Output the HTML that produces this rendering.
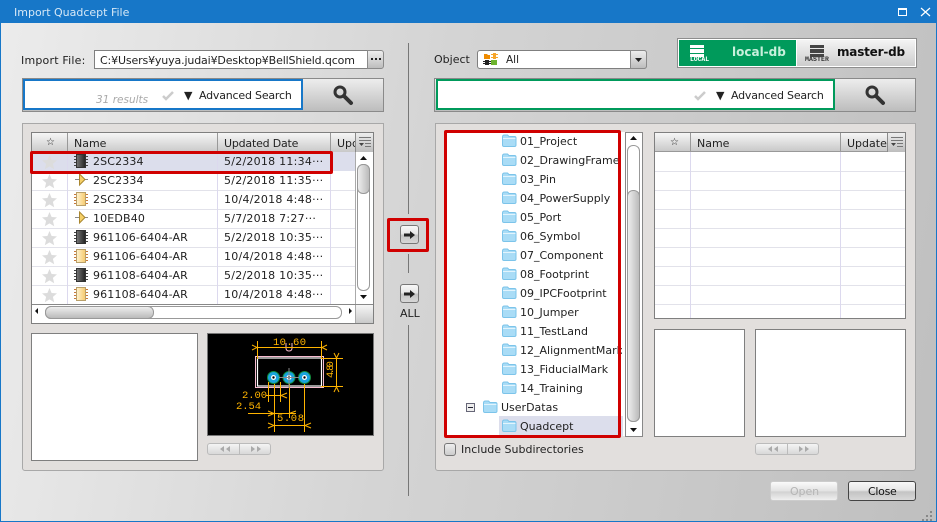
<!DOCTYPE html>
<html><head><meta charset="utf-8"><style>
html,body{margin:0;padding:0}
#w{position:relative;width:937px;height:522px;overflow:hidden;background:linear-gradient(100deg,#ececec 0%,#d4d4d4 45%,#bfbfbf 100%);font:11px "DejaVu Sans",sans-serif;color:#222}
#w div,#w span.t{position:absolute;box-sizing:border-box;white-space:nowrap}
.t{line-height:14px;margin-top:1px}
.d{letter-spacing:.25px}
.n{letter-spacing:.15px}
.as{letter-spacing:-.2px}
.panel{background:#e2dfdd;border:1px solid #a8a8a8;border-radius:0 0 3px 3px}
.box{background:#fff;border:1px solid #7f7f7f}
.hd{background:linear-gradient(#f6f6f6,#c9c9c9)}
.btn{background:linear-gradient(#f8f8f8 0,#e6e6e6 45%,#c4c4c4 55%,#d8d8d8 100%);border:1px solid #777;border-radius:3px}
.g{background:linear-gradient(#ededed,#bdbdbd);border:1px solid #8a8a8a}
.red{border:3px solid #d00000;border-radius:2px}
.hl{height:1px;background:#e2e2ea}
.vl{width:1px;background:#dcd9ee}
.nav{background:linear-gradient(#f4f4f4,#d8d8d8);border:1px solid #bbb;border-radius:3px}
svg{position:absolute;left:0;top:0}
</style></head><body><div id="w">
<div style="left:0;top:0;width:937px;height:23px;background:#1777c8"></div>
<div style="left:0;top:23px;width:1px;height:499px;background:#1777c8"></div>
<div style="left:936px;top:23px;width:1px;height:499px;background:#1777c8"></div>
<div style="left:0;top:521px;width:937px;height:1px;background:#1777c8"></div>
<span class="t" style="left:14px;top:5px;color:#d6e8f6">Import Quadcept File</span>

<span class="t n" style="left:21px;top:53px;letter-spacing:.2px">Import File:</span>
<div class="box" style="left:94px;top:50px;width:274px;height:19px"></div>
<span class="t" style="left:100px;top:53px;letter-spacing:-.14px;font-family:'DejaVu Sans','Noto Sans CJK JP',sans-serif">C:¥Users¥yuya.judai¥Desktop¥BellShield.qcom</span>
<div class="g" style="left:367px;top:50px;width:17px;height:19px;border-radius:0 3px 3px 0"></div>

<div class="g" style="left:22px;top:78px;width:362px;height:34px"></div>
<div style="left:23px;top:79px;width:280px;height:31px;background:#fff;border:2px solid #1777c8"></div>
<span class="t" style="left:96px;top:92px;color:#aaa;font-style:italic;font-size:10.5px">31 results</span>
<span class="t" style="left:184px;top:88px">▼</span>
<span class="t as" style="left:199px;top:88px">Advanced Search</span>

<span class="t" style="left:434px;top:52px">Object</span>
<div class="box" style="left:477px;top:50px;width:170px;height:19px;border-radius:3px"></div>
<div class="g" style="left:630px;top:50px;width:17px;height:19px;border-radius:0 3px 3px 0"></div>
<span class="t" style="left:506px;top:52px;font-size:10.5px">All</span>

<div style="left:677px;top:38px;width:240px;height:30px;background:#fff;border:1px solid #8d8d8d"></div>
<div style="left:679px;top:40px;width:117px;height:26px;background:#009a5b"></div>
<div style="left:797px;top:40px;width:118px;height:26px;background:linear-gradient(#f4f4f4,#cdcdcd)"></div>
<span class="t" style="left:732px;top:44px;font-weight:bold;font-size:12px;color:#c8f0dc">local-db</span>
<span class="t" style="left:837px;top:44px;font-weight:bold;font-size:12px;letter-spacing:-.2px;color:#111">master-db</span>
<span class="t" style="left:690px;top:56px;font:bold 6px/8px 'Liberation Mono',monospace;letter-spacing:-.1px;font-size:6.5px;color:#fff;margin:0">LOCAL</span>
<span class="t" style="left:805px;top:56px;font:bold 6.5px/8px 'Liberation Mono',monospace;color:#333;letter-spacing:.1px;margin:0">MASTER</span>

<div class="g" style="left:434px;top:78px;width:482px;height:34px"></div>
<div style="left:436px;top:79px;width:399px;height:31px;background:#fff;border:2px solid #009a5b"></div>
<span class="t" style="left:716px;top:88px">▼</span>
<span class="t as" style="left:731px;top:88px">Advanced Search</span>

<!-- left panel -->
<div class="panel" style="left:22px;top:123px;width:362px;height:348px"></div>
<div class="box" style="left:31px;top:132px;width:343px;height:192px;border-color:#7f7f7f"></div>
<div class="hd" style="left:32px;top:133px;width:341px;height:19px"></div>
<div style="left:67px;top:133px;width:1px;height:19px;background:#999"></div>
<div style="left:217px;top:133px;width:1px;height:19px;background:#999"></div>
<div style="left:330px;top:133px;width:1px;height:19px;background:#999"></div>
<span class="t" style="left:46px;top:135px;font-size:10px">☆</span>
<span class="t" style="left:74px;top:136px">Name</span>
<span class="t as" style="left:224px;top:136px">Updated Date</span>
<div style="left:337px;top:137px;width:18px;height:14px;overflow:hidden"><span class="t" style="position:absolute;left:0;top:0;margin:0">Updated</span></div>
<div class="g" style="left:355px;top:133px;width:18px;height:19px;border-width:0 0 0 1px"></div>
<div style="left:32px;top:152px;width:323px;height:19px;background:#dcdeec"></div>
<div class="hl" style="left:32px;top:190px;width:323px"></div>
<div class="hl" style="left:32px;top:209px;width:323px"></div>
<div class="hl" style="left:32px;top:228px;width:323px"></div>
<div class="hl" style="left:32px;top:247px;width:323px"></div>
<div class="hl" style="left:32px;top:266px;width:323px"></div>
<div class="hl" style="left:32px;top:285px;width:323px"></div>
<div class="vl" style="left:67px;top:152px;height:153px"></div>
<div class="vl" style="left:217px;top:152px;height:153px"></div>
<div class="vl" style="left:330px;top:152px;height:153px"></div>

<span class="t n" style="left:93px;top:154px">2SC2334</span><span class="t d" style="left:224px;top:154px">5/2/2018 11:34···</span>
<span class="t n" style="left:93px;top:173px">2SC2334</span><span class="t d" style="left:224px;top:173px">5/2/2018 11:35···</span>
<span class="t n" style="left:93px;top:192px">2SC2334</span><span class="t d" style="left:224px;top:192px">10/4/2018 4:48···</span>
<span class="t n" style="left:93px;top:211px">10EDB40</span><span class="t d" style="left:224px;top:211px">5/7/2018 7:27···</span>
<span class="t n" style="left:93px;top:230px">961106-6404-AR</span><span class="t d" style="left:224px;top:230px">5/2/2018 10:35···</span>
<span class="t n" style="left:93px;top:249px">961106-6404-AR</span><span class="t d" style="left:224px;top:249px">10/4/2018 4:48···</span>
<span class="t n" style="left:93px;top:268px">961108-6404-AR</span><span class="t d" style="left:224px;top:268px">5/2/2018 10:35···</span>
<span class="t n" style="left:93px;top:287px">961108-6404-AR</span><span class="t d" style="left:224px;top:287px">10/4/2018 4:48···</span>

<!-- left scrollbars -->
<div style="left:355px;top:152px;width:18px;height:153px;background:#fff;border-left:1px solid #aaa"></div>
<div style="left:357px;top:164px;width:13px;height:127px;background:#fff;border:1px solid #999;border-radius:6px"></div>
<div style="left:357px;top:164px;width:13px;height:30px;background:linear-gradient(90deg,#eee,#bbb);border:1px solid #999;border-radius:6px"></div>
<div style="left:32px;top:304px;width:341px;height:1px;background:#888"></div>
<div style="left:32px;top:305px;width:323px;height:18px;background:#fff"></div>
<div class="hd" style="left:355px;top:305px;width:18px;height:18px;border-left:1px solid #aaa"></div>
<div style="left:45px;top:306px;width:297px;height:13px;background:#fff;border:1px solid #999;border-radius:6px"></div>
<div style="left:45px;top:306px;width:109px;height:13px;background:linear-gradient(#eee,#bbb);border:1px solid #999;border-radius:6px"></div>

<div class="box" style="left:31px;top:333px;width:167px;height:128px"></div>
<div style="left:207px;top:333px;width:167px;height:103px;background:#000;border:1px solid #777"></div>
<div class="nav" style="left:207px;top:443px;width:64px;height:12px"></div>

<!-- right panel -->
<div class="panel" style="left:435px;top:123px;width:481px;height:348px"></div>
<div style="left:446px;top:132px;width:180px;height:304px;background:#fff"></div>
<div style="left:625px;top:132px;width:18px;height:305px;background:#fff;border:1px solid #888"></div>
<div style="left:627px;top:145px;width:13px;height:277px;background:#fff;border:1px solid #999;border-radius:6px"></div>
<div style="left:627px;top:190px;width:13px;height:232px;background:linear-gradient(90deg,#eee,#bbb);border:1px solid #999;border-radius:6px"></div>
<div style="left:499px;top:416px;width:124px;height:20px;background:#dcdeec"></div>

<div style="left:446px;top:132px;width:176px;height:304px;overflow:hidden">
<span class="t" style="left:74px;top:2px">01_Project</span>
<span class="t" style="left:74px;top:21px">02_DrawingFrame</span>
<span class="t" style="left:74px;top:40px">03_Pin</span>
<span class="t" style="left:74px;top:59px">04_PowerSupply</span>
<span class="t" style="left:74px;top:78px">05_Port</span>
<span class="t" style="left:74px;top:97px">06_Symbol</span>
<span class="t" style="left:74px;top:116px">07_Component</span>
<span class="t" style="left:74px;top:135px">08_Footprint</span>
<span class="t" style="left:74px;top:154px">09_IPCFootprint</span>
<span class="t" style="left:74px;top:173px">10_Jumper</span>
<span class="t" style="left:74px;top:192px">11_TestLand</span>
<span class="t" style="left:74px;top:211px">12_AlignmentMark</span>
<span class="t" style="left:74px;top:230px">13_FiducialMark</span>
<span class="t" style="left:74px;top:249px">14_Training</span>
<span class="t" style="left:55px;top:268px">UserDatas</span>
<span class="t" style="left:74px;top:287px">Quadcept</span>
</div>
<div style="left:444px;top:443px;width:12px;height:13px;border:1px solid #777;border-radius:3px;background:linear-gradient(#eee,#ccc)"></div>
<span class="t" style="left:461px;top:442px">Include Subdirectories</span>

<div class="box" style="left:654px;top:132px;width:252px;height:187px"></div>
<div class="hd" style="left:655px;top:133px;width:250px;height:19px;border-bottom:1px solid #999"></div>
<div style="left:690px;top:133px;width:1px;height:19px;background:#999"></div>
<div style="left:840px;top:133px;width:1px;height:19px;background:#999"></div>
<span class="t" style="left:670px;top:135px;font-size:10px">☆</span>
<span class="t" style="left:697px;top:136px">Name</span>
<div style="left:847px;top:137px;width:40px;height:14px;overflow:hidden"><span class="t" style="position:absolute;left:0;top:0;margin:0">Updated</span></div>
<div class="g" style="left:887px;top:133px;width:18px;height:19px;border-width:0 0 0 1px"></div>
<div class="hl" style="left:655px;top:171px;width:250px"></div>
<div class="hl" style="left:655px;top:190px;width:250px"></div>
<div class="hl" style="left:655px;top:209px;width:250px"></div>
<div class="hl" style="left:655px;top:228px;width:250px"></div>
<div class="hl" style="left:655px;top:247px;width:250px"></div>
<div class="hl" style="left:655px;top:266px;width:250px"></div>
<div class="hl" style="left:655px;top:285px;width:250px"></div>
<div class="hl" style="left:655px;top:304px;width:250px"></div>
<div class="vl" style="left:690px;top:152px;height:166px"></div>
<div class="vl" style="left:840px;top:152px;height:166px"></div>
<div class="box" style="left:654px;top:329px;width:91px;height:108px"></div>
<div class="box" style="left:755px;top:329px;width:151px;height:108px"></div>
<div class="nav" style="left:755px;top:443px;width:64px;height:12px"></div>

<!-- center -->
<div style="left:408px;top:43px;width:1px;height:171px;background:#777"></div>
<div style="left:408px;top:254px;width:1px;height:19px;background:#777"></div>
<div style="left:408px;top:325px;width:1px;height:171px;background:#777"></div>
<div class="btn" style="left:400px;top:225px;width:19px;height:19px"></div>
<div class="btn" style="left:400px;top:284px;width:19px;height:19px"></div>
<span class="t" style="left:400px;top:306px;font-size:11px">ALL</span>

<div class="btn" style="left:770px;top:481px;width:68px;height:20px;border-color:#ccc;background:linear-gradient(#fafafa,#e2e2e2 50%,#d2d2d2 55%,#f0f0f0)"></div>
<span class="t" style="left:790px;top:484px;color:#b5b5b5;letter-spacing:-.1px">Open</span>
<div class="btn" style="left:848px;top:481px;width:68px;height:20px;border-color:#444"></div>
<span class="t" style="left:868px;top:484px;color:#111;letter-spacing:-.3px">Close</span>

<svg width="937" height="522" viewBox="0 0 937 522">
<defs>
<linearGradient id="cd" x1="0" x2="1" y1="0" y2="0"><stop offset="0" stop-color="#777"/><stop offset="1" stop-color="#222"/></linearGradient>
<linearGradient id="cl" x1="0" x2="1" y1="0" y2="0"><stop offset="0" stop-color="#fff3d2"/><stop offset="1" stop-color="#f6c96c"/></linearGradient>
<g id="star"><path d="M7.500 0 L9.600 5 L15 5.400 L10.900 8.900 L12.200 14.200 L7.500 11.400 L2.800 14.200 L4.100 8.900 L0 5.400 L5.400 5 Z" fill="#dcdcdc"/></g>
<g id="chipD"><path d="M0 2.500H14M0 5.500H14M0 8.500H14M0 11.500H14" stroke="#444" stroke-width="1"/><rect x="2.500" y="0.500" width="9" height="13" fill="url(#cd)" stroke="#333"/></g>
<g id="chipL"><path d="M0 2.500H14M0 5.500H14M0 8.500H14M0 11.500H14" stroke="#c8793a" stroke-width="1"/><rect x="2.500" y="0.500" width="9" height="13" fill="url(#cl)" stroke="#b9a06a"/></g>
<g id="sym"><path d="M0 6.500H4M9 6.500H13" stroke="#8a8a8a"/><path d="M4.500 1 L10 6.500 L4.500 12 Z" fill="#f6d068" stroke="#a9862f"/></g>
<g id="fd"><path d="M0.500 3 Q0.500 1 2.500 1 H5.500 L7 2.500 H12.500 Q14 2.500 14 4 V11 Q14 12.500 12.500 12.500 H2 Q0.500 12.500 0.500 11 Z" fill="#a9dcf6" stroke="#7cc4ea"/><rect x="1" y="4" width="12.500" height="1" fill="#e2f4fd"/></g>
<g id="mag"><circle cx="7" cy="7" r="5" fill="none" stroke="#333" stroke-width="3"/><path d="M11 11 L18 18" stroke="#333" stroke-width="4" stroke-linecap="round"/></g>
<g id="arr"><path d="M4 7.500H10V5L15 9 10 13V10.500H4Z" fill="#222"/></g>
<g id="flt"><path d="M3 1.500H15M3 4.500H15M9 7.500H15M9 10.500H15" stroke="#777" fill="none"/><path d="M3 7H8L5.500 10Z" fill="#444"/></g>
</defs>
<!-- title buttons -->
<rect x="898.500" y="8.500" width="8" height="7" fill="none" stroke="#fff"/><rect x="898" y="8" width="9" height="2" fill="#fff"/>
<path d="M921 8L930 16M930 8L921 16" stroke="#fff" stroke-width="1.200"/>
<!-- import dots -->
<path d="M371 58h2v2h-2zM375 58h2v2h-2zM379 58h2v2h-2z" fill="#222"/>
<!-- search -->
<path d="M163 96l3 3 7-7" fill="none" stroke="#ccc" stroke-width="2.500"/>
<path d="M695 96l3 3 7-7" fill="none" stroke="#ccc" stroke-width="2.500"/>
<use href="#mag" x="333" y="85"/><use href="#mag" x="865" y="85"/>
<!-- combo icon -->
<path d="M484 54h3l1 1h2v4h-6z" fill="#ef8b00"/><rect x="493" y="53" width="3" height="6" fill="#f6a52a"/><path d="M491 54.500h7M491 57.500h7" stroke="#f6a52a"/><path d="M483 61.500h8M483 63.500h8" stroke="#222"/><rect x="485" y="60" width="4" height="5" fill="#222"/><rect x="491" y="60" width="6" height="5" fill="#6db32e"/>
<path d="M635 58H642L638.500 62Z" fill="#222"/>
<!-- db icons -->
<path d="M690 45h14v3h-14zM690 49h14v4h-14zM690 54h14v3h-14z" fill="#fff"/>
<path d="M810 45h14v3h-14zM810 49h14v4h-14zM810 54h14v3h-14z" fill="#444"/>
<!-- stars -->
<use href="#star" x="42" y="155"/><use href="#star" x="42" y="174"/><use href="#star" x="42" y="193"/><use href="#star" x="42" y="212"/><use href="#star" x="42" y="231"/><use href="#star" x="42" y="250"/><use href="#star" x="42" y="269"/><use href="#star" x="42" y="288"/>
<!-- row icons -->
<use href="#chipD" x="74" y="154"/><use href="#sym" x="75" y="173"/><use href="#chipL" x="74" y="192"/><use href="#sym" x="75" y="211"/><use href="#chipD" x="74" y="230"/><use href="#chipL" x="74" y="249"/><use href="#chipD" x="74" y="268"/><use href="#chipL" x="74" y="287"/>
<!-- filters -->
<use href="#flt" x="356" y="136"/><use href="#flt" x="888" y="136"/>
<!-- scroll arrows -->
<path d="M360 160h7l-3.500-4zM360 295h7l-3.500 4zM38 308v6l-3-3zM349 308v6l3-3z" fill="#111"/>
<path d="M630 140h7l-3.500-4zM630 428h7l-3.500 4z" fill="#111"/>
<!-- folders -->
<use href="#fd" x="502" y="134"/><use href="#fd" x="502" y="153"/><use href="#fd" x="502" y="172"/><use href="#fd" x="502" y="191"/><use href="#fd" x="502" y="210"/><use href="#fd" x="502" y="229"/><use href="#fd" x="502" y="248"/><use href="#fd" x="502" y="267"/><use href="#fd" x="502" y="286"/><use href="#fd" x="502" y="305"/><use href="#fd" x="502" y="324"/><use href="#fd" x="502" y="343"/><use href="#fd" x="502" y="362"/><use href="#fd" x="502" y="381"/><use href="#fd" x="483" y="400"/><use href="#fd" x="502" y="419"/>
<rect x="466.500" y="403.500" width="8" height="8" fill="#eee" stroke="#667"/><path d="M468 407.500h5" stroke="#223"/>
<!-- arrows center -->
<use href="#arr" x="400" y="226"/><use href="#arr" x="400" y="285"/>
<!-- nav arrows -->
<path d="M224 446l-4 3 4 3zM230 446l-4 3 4 3zM251 446l4 3-4 3zM257 446l4 3-4 3zM772 446l-4 3 4 3zM778 446l-4 3 4 3zM799 446l4 3-4 3zM805 446l4 3-4 3z" fill="#aaa"/>
<path d="M239.500 443v12M787.500 443v12" stroke="#bbb"/>
<!-- grip -->
<path d="M930 511h2v2h-2zM926 515h2v2h-2zM930 515h2v2h-2zM922 519h2v2h-2zM926 519h2v2h-2zM930 519h2v2h-2z" fill="#888"/>
<!-- PCB -->
<g fill="none">
<rect x="255.500" y="356.500" width="68" height="31" stroke="#f7bcd0"/>
<rect x="257.500" y="358" width="64" height="28" stroke="#fff" stroke-width="1.200"/>
<path d="M286 343v5q0 3 3 3t3-3v-5" stroke="#f7bcd0"/>
<g stroke="#ffb400">
<path d="M257.500 341v18M321.500 341v18M257.500 347.500H321.500"/>
<path d="M252 345l5 2.500-5 2.500M327 345l-5 2.500 5 2.500"/>
<path d="M321 358.500H343M321 386.500H343M336.500 358V386M334 353l2.500 5 2.500-5M334 392l2.500-5 2.500 5"/>
<path d="M268.500 382V402M274.500 382V432M280.500 382V402M289.500 382V418M304.500 382V432"/>
<path d="M266 395.500H281M287 393l-6 2.500 6 2.500M248 413.500H296M268 411l6 2.500-6 2.500M296 411l-7 2.500"/>
<path d="M274 425.500H305M268 423l6 2.500-6 2.500M311 423l-6 2.500 6 2.500"/>
</g>
</g>
<g>
<circle cx="273.500" cy="377.500" r="6" fill="#1aa3dd" stroke="#128a3c"/><circle cx="273.500" cy="377.500" r="2.500" fill="#fff"/><circle cx="273.500" cy="377.500" r="1.200" fill="#000"/>
<circle cx="289" cy="377.500" r="6" fill="#1aa3dd" stroke="#128a3c"/><circle cx="289" cy="377.500" r="2.500" fill="#fff"/><circle cx="289" cy="377.500" r="1.200" fill="#000"/>
<circle cx="304.500" cy="377.500" r="6" fill="#1aa3dd" stroke="#128a3c"/><circle cx="304.500" cy="377.500" r="2.500" fill="#fff"/><circle cx="304.500" cy="377.500" r="1.200" fill="#000"/>
<path d="M279 377.500H299M289 368V388" stroke="#888"/>
</g>
<g fill="#ffb400" font-family="Liberation Mono,monospace" font-size="10.500">
<text x="273" y="345" textLength="33">10.60</text>
<text x="242" y="398" textLength="25">2.00</text>
<text x="236" y="409" textLength="25">2.54</text>
<text x="277" y="421" textLength="27">5.08</text>
<text transform="translate(333,378) rotate(-90)" textLength="17">4.80</text>
</g>
</svg>

<!-- red highlights -->
<div class="red" style="left:30px;top:151px;width:303px;height:23px"></div>
<div class="red" style="left:387px;top:218px;width:42px;height:34px"></div>
<div class="red" style="left:444px;top:130px;width:177px;height:308px"></div>
</div></body></html>
